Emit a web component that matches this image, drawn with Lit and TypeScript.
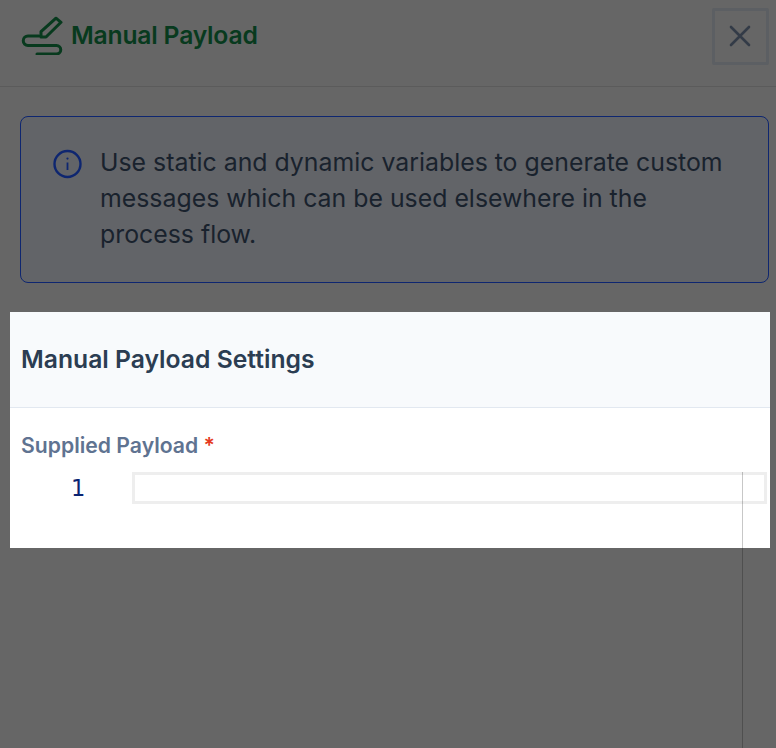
import { LitElement, html, css } from "lit";
import { customElement } from "lit/decorators.js";

@customElement("app-root")
export class AppRoot extends LitElement {
  static styles = css`
    :host {
      display: block;
      height: 748px;
      overflow: hidden;
      background: #666666;
      font-family: Inter, "Liberation Sans", sans-serif;
    }
    .head {
      height: 87px;
      box-sizing: border-box;
      border-bottom: 1px solid #5b5b5b;
      display: flex;
      align-items: flex-start;
      justify-content: space-between;
      padding: 8px 7px 0 20px;
    }
    .title {
      display: flex;
      align-items: center;
      height: 54px;
      gap: 8px;
      color: #083a1e;
      font-size: 24.7px;
      font-weight: 600;
      letter-spacing: -0.2px;
    }
    .close {
      width: 57px;
      height: 57px;
      box-sizing: border-box;
      border: 3px solid #5c5f63;
      border-radius: 2px;
      display: flex;
      align-items: center;
      justify-content: center;
      padding: 0 1px 2px 0;
    }
    .body {
      padding: 29px 7px 0 20px;
    }
    .info {
      height: 167px;
      box-sizing: border-box;
      border: 1px solid #0e2670;
      border-radius: 8px;
      background: #626468;
      display: flex;
      gap: 17px;
      padding: 27px 30px 0 32px;
      color: #19222d;
      font-size: 24.85px;
      line-height: 36px;
    }
    .info svg {
      flex: none;
      margin-top: 5px;
    }
    .panel {
      margin: 29px 0 0 -10px;
      background: #ffffff;
      width: 760px;
      height: 236px;
    }
    .panel-head {
      height: 96px;
      box-sizing: border-box;
      background: #f8fafc;
      border-bottom: 1px solid #e2e8f0;
      display: flex;
      align-items: center;
      padding: 0 0 2px 11px;
      color: #2b3d52;
      font-size: 24.7px;
      font-weight: 600;
    }
    .panel-body {
      padding: 23px 3px 0 11px;
    }
    .label {
      color: #5f7391;
      font-size: 21.2px;
      font-weight: 600;
      line-height: 28px;
    }
    .req {
      color: #e53920;
    }
    .editor {
      display: flex;
      margin-top: 13px;
      position: relative;
    }
    .num {
      width: 111px;
      flex: none;
      box-sizing: border-box;
      padding-left: 50px;
      color: #0a2472;
      font-size: 22.5px;
      line-height: 32px;
      font-family: "DejaVu Sans", sans-serif;
    }
    .field {
      flex: 1;
      height: 32px;
      box-sizing: border-box;
      border: 3px solid #eeeeee;
    }
    .rule {
      position: absolute;
      left: 721px;
      top: 0;
      width: 1px;
      height: 276px;
      background: rgba(0, 0, 0, 0.22);
    }
  `;

  render() {
    return html`
      <div class="head">
        <div class="title">
          <svg width="43" height="40" viewBox="20 14 43 40" fill="none" stroke="#083a1e" stroke-width="3" stroke-linecap="round" stroke-linejoin="round">
            <path d="M39 35H28a4.7 4.7 0 0 0 0 9.5H56.5a4.2 4.2 0 0 1 0 8.5H37" />
            <path d="M56 17.2 61 21.3 46 36H41V30.7Z" />
          </svg>
          <span>Manual Payload</span>
        </div>
        <div class="close">
          <svg width="24" height="24" viewBox="0 0 24 24" fill="none" stroke="#333b47" stroke-width="2.6" stroke-linecap="round">
            <path d="M3 3 21 21M21 3 3 21" />
          </svg>
        </div>
      </div>
      <div class="body">
        <div class="info">
          <svg width="30" height="30" viewBox="0 0 30 30" fill="none" stroke="#0e2670">
            <circle cx="14.5" cy="15" r="13" stroke-width="2.4" />
            <path d="M14.5 13.5V21" stroke-width="1.8" />
            <circle cx="14.5" cy="9.6" r="1.1" fill="#0e2670" stroke="none" />
          </svg>
          <div>Use static and dynamic variables to generate custom messages which can be used elsewhere in the process flow.</div>
        </div>
        <div class="panel">
          <div class="panel-head">Manual Payload Settings</div>
          <div class="panel-body">
            <div class="label">Supplied Payload <span class="req">*</span></div>
            <div class="editor">
              <div class="num">1</div>
              <div class="field"></div>
              <div class="rule"></div>
            </div>
          </div>
        </div>
      </div>
    `;
  }
}
